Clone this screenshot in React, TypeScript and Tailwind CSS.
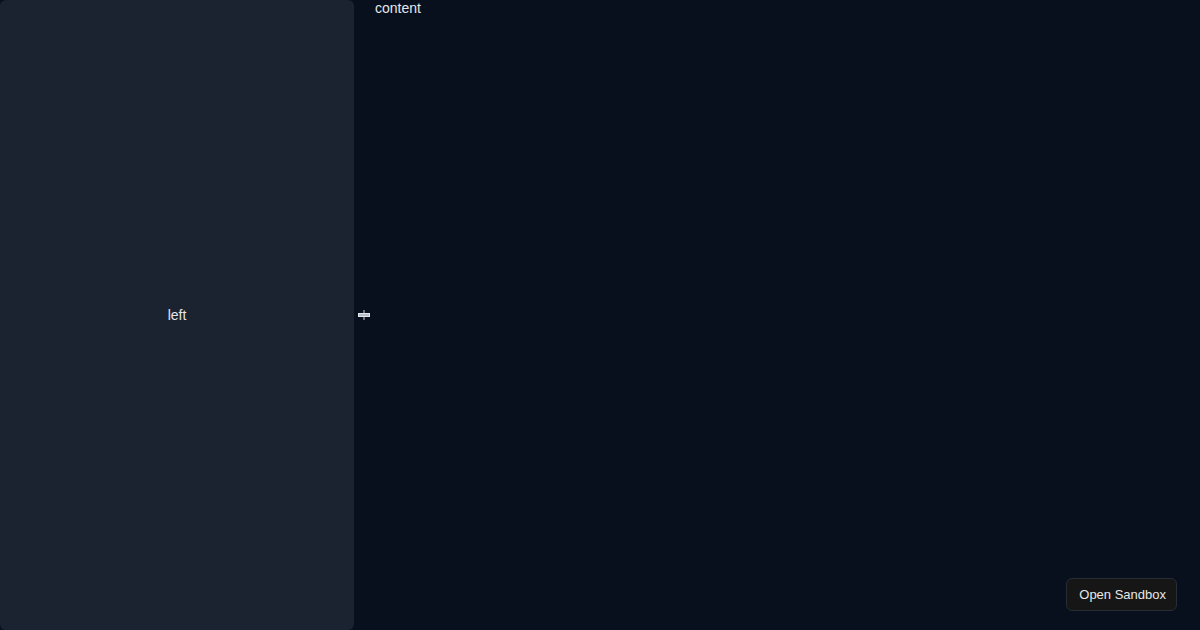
import React from 'react';

const font = { fontFamily: '"Liberation Sans", Arial, sans-serif' };

const ResizeHandle = () => (
  <div className="w-[21px] shrink-0 flex items-center justify-center pr-px cursor-col-resize">
    <svg width="12" height="11" viewBox="0 0 12 11" fill="none">
      <rect x="5.5" y="0" width="1" height="3" fill="#cbd0d8" />
      <rect x="0.5" y="3.5" width="11" height="3" fill="#b9bec7" stroke="#e2e5ea" strokeWidth="1" />
      <rect x="5.5" y="7" width="1" height="3" fill="#cbd0d8" />
    </svg>
  </div>
);

export default function App() {
  return (
    <div className="relative flex h-[630px] w-full bg-[#09101d] text-[#e5e7eb] text-sm" style={font}>
      <aside className="w-[354px] shrink-0 rounded-md bg-[#1b2331] flex items-center justify-center">
        left
      </aside>
      <ResizeHandle />
      <main className="flex-1 leading-4">content</main>
      <button className="absolute right-[23px] bottom-[19px] h-[33px] pl-3 pr-[10px] pt-px rounded-md border border-[#272c35] bg-[#161616] text-[#e8e8e8] text-[13px]">
        Open Sandbox
      </button>
    </div>
  );
}
